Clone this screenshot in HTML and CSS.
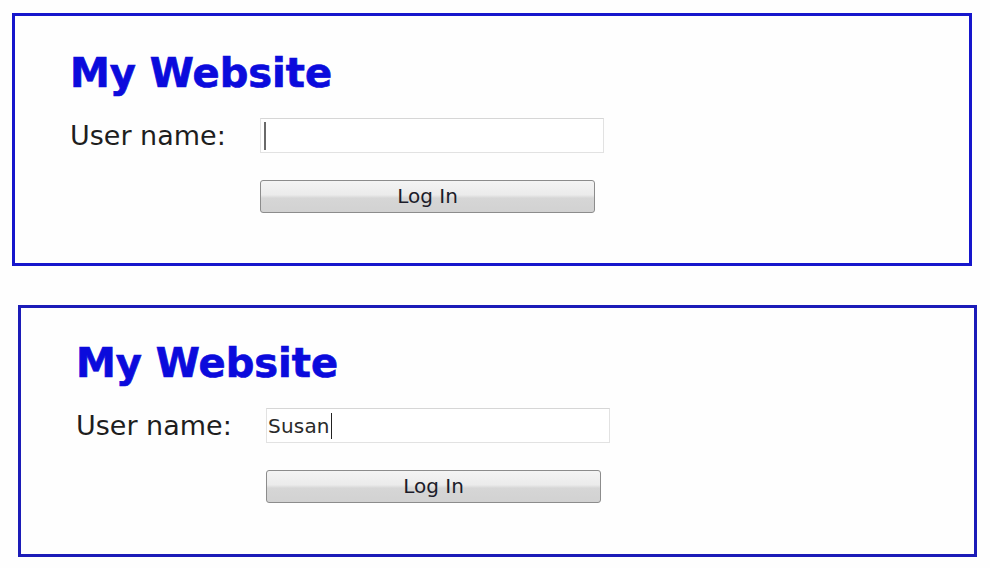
FILE: index.html
```html
<!DOCTYPE html>
<html>
<head>
<meta charset="utf-8">
<link rel="stylesheet" href="styles.css">
</head>
<body>
<div class="page">
  <section class="panel panel-first">
    <h1 class="title">My Website</h1>
    <div class="row">
      <span class="label">User name:</span>
      <div class="field"><span class="caret caret-empty"></span></div>
    </div>
    <div class="row row-button">
      <button class="login" type="button">Log In</button>
    </div>
  </section>
  <section class="panel panel-second">
    <h1 class="title">My Website</h1>
    <div class="row">
      <span class="label">User name:</span>
      <div class="field"><span class="value">Susan</span><span class="caret caret-text"></span></div>
    </div>
    <div class="row row-button">
      <button class="login" type="button">Log In</button>
    </div>
  </section>
</div>
</body>
</html>
```
FILE: styles.css
```css
html, body {
  margin: 0;
  padding: 0;
  background: #fefefe;
}

.page {
  display: flex;
  flex-direction: column;
  padding: 13px 0 0 0;
}

.panel {
  box-sizing: border-box;
  border: 3px solid #1616cc;
  background: #fefefe;
  padding: 37px 0 0 55px;
  height: 253px;
}

.panel-first {
  margin-left: 12px;
  width: 960px;
}

.panel-second {
  margin-left: 18px;
  margin-top: 39px;
  width: 959px;
  height: 252px;
  padding-top: 35px;
  border-color: #1c1cb8;
}

.title {
  margin: 0;
  font-family: "DejaVu Sans", Verdana, sans-serif;
  font-weight: bold;
  font-size: 40px;
  line-height: 40px;
  color: #0b0bdc;
  -webkit-text-stroke: 0.7px #0b0bdc;
}

.row {
  display: flex;
  align-items: center;
}

.row:nth-of-type(1) {
  margin-top: 25px;
}

.label {
  width: 190px;
  font-family: "DejaVu Sans", Verdana, sans-serif;
  font-size: 27px;
  line-height: 27px;
  color: #1e1e1e;
}

.field {
  box-sizing: border-box;
  width: 344px;
  height: 35px;
  border: 1px solid #e2e2e2;
  border-top-color: #d6d6d6;
  background: #ffffff;
  display: flex;
  align-items: center;
  padding-left: 1px;
}

.value {
  font-family: "DejaVu Sans", Tahoma, sans-serif;
  font-size: 20px;
  letter-spacing: 0.2px;
  color: #2a2a2a;
}

.caret {
  display: block;
}

.caret-empty {
  width: 2px;
  height: 28px;
  background: #6a6a6a;
  margin-left: 2px;
}

.caret-text {
  width: 1px;
  height: 26px;
  background: #222;
  margin-left: 1px;
}

.row-button {
  margin-top: 27px;
  padding-left: 190px;
}

.login {
  box-sizing: border-box;
  width: 335px;
  height: 33px;
  margin: 0;
  padding: 0;
  border: 1px solid #8c8c8c;
  border-radius: 3px;
  background: linear-gradient(to bottom, #f4f4f4 0%, #ebebeb 45%, #d6d6d6 55%, #d2d2d2 100%);
  font-family: "DejaVu Sans", Tahoma, sans-serif;
  font-size: 20px;
  color: #1c1c2a;
  line-height: 31px;
  text-align: center;
}
```
